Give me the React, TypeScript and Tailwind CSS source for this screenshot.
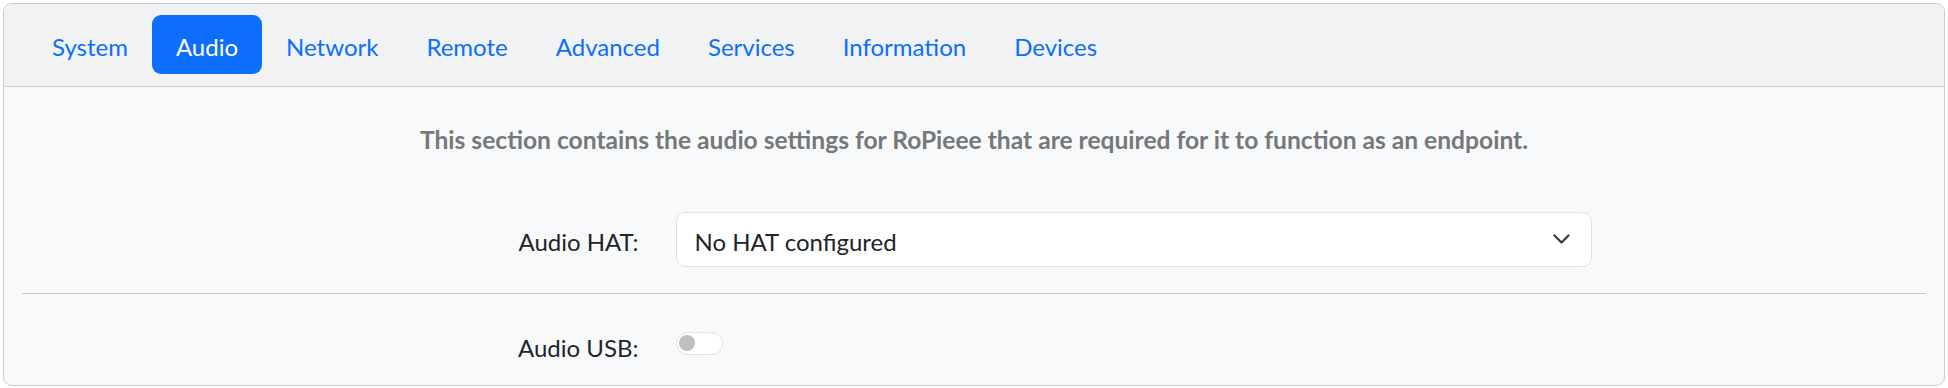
import { useState } from 'react';

const tabs = ['System', 'Audio', 'Network', 'Remote', 'Advanced', 'Services', 'Information', 'Devices'];

export default function App() {
  const [active, setActive] = useState('Audio');
  const [usb, setUsb] = useState(false);

  return (
    <div className="p-[3px] bg-white" style={{ fontFamily: 'Lato, "Liberation Sans", sans-serif' }}>
      <div className="h-[383px] rounded-[9px] border-[1.5px] border-[#cbcccd] overflow-hidden bg-[#f8f9fa]">
        {/* tabs */}
        <div className="bg-[#f1f2f4] border-b-[1.5px] border-[#cbcccd] px-[24px] pt-[10.5px] pb-[12px]">
          <nav className="flex">
            {tabs.map((t) => (
              <button
                key={t}
                onClick={() => setActive(t)}
                className={
                  'px-[24px] pt-[14px] pb-[9px] text-[24px] leading-[36px] rounded-[9px] ' +
                  (t === active ? 'bg-[#0d6efd] text-white' : 'text-[#0d6efd]')
                }
              >
                {t}
              </button>
            ))}
          </nav>
        </div>

        {/* body */}
        <div className="px-[18px] pt-[35px]">
          <p className="text-center text-[24.6px] leading-[36px] font-bold text-[#75787b]">
            This section contains the audio settings for RoPieee that are required for it to function as an endpoint.
          </p>

          <div className="flex items-center mt-[54px]">
            <label className="w-[653.5px] pr-[37px] pt-[5px] text-right text-[24px] leading-[36px] text-[#212529]">
              Audio HAT:
            </label>
            <div className="w-[916px] h-[55px] bg-white border-[1.5px] border-[#dee2e6] rounded-[9px] pl-[18px] pr-[21px] flex items-center justify-between">
              <span className="pt-[5px] text-[24px] leading-[36px] text-[#212529]">No HAT configured</span>
              <svg width="17" height="10" viewBox="0 0 17 10" fill="none">
                <path d="M1.5 1.5 L8.5 8.5 L15.5 1.5" stroke="#343a40" strokeWidth="2.2" strokeLinecap="round" strokeLinejoin="round" />
              </svg>
            </div>
          </div>

          <div className="mt-[26px] border-t-[1.5px] border-[#c6c7c9]" />

          <div className="flex items-start mt-[34px]">
            <label className="w-[653.5px] pr-[37px] pt-[2px] text-right text-[24px] leading-[36px] text-[#212529]">
              Audio USB:
            </label>
            <button
              onClick={() => setUsb(!usb)}
              className={
                'mt-[4px] w-[47px] h-[23px] rounded-full border-[1.5px] flex items-center px-[2.5px] ' +
                (usb ? 'bg-[#0d6efd] border-[#0d6efd] justify-end' : 'bg-white border-[#dee2e6] justify-start')
              }
            >
              <span className={'w-[16px] h-[16px] rounded-full ' + (usb ? 'bg-white' : 'bg-[#bfbfbf]')} />
            </button>
          </div>
        </div>
      </div>
    </div>
  );
}
